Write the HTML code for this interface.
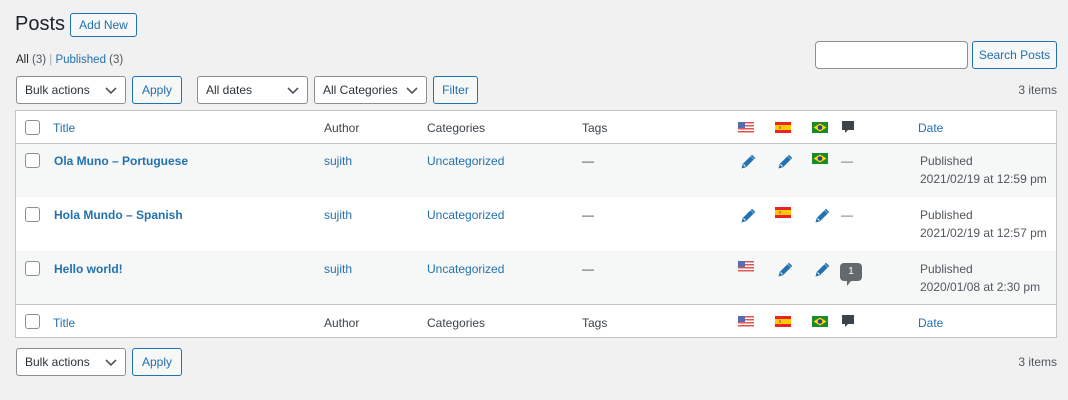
<!DOCTYPE html>
<html><head><meta charset="utf-8"><style>
*{box-sizing:border-box}
body{margin:0;width:1068px;height:400px;background:#f1f1f1;font-family:"Liberation Sans",sans-serif;font-size:12px;color:#3c434a;position:relative;overflow:hidden}
.a{position:absolute;white-space:nowrap}
a,.l{color:#2271b1;text-decoration:none}
.btn{position:absolute;border:1px solid #2271b1;border-radius:3px;background:#f6f7f7;color:#2271b1;font-size:12px;text-align:center;line-height:26px;height:28px}
.sel{position:absolute;border:1px solid #8c8f94;border-radius:3px;background:#fff;height:28px;line-height:26px;padding-left:8px;color:#2c3338;font-size:12px}
.sel svg{position:absolute;right:8px;top:10px}
.cb{position:absolute;width:15px;height:15px;border:1px solid #8c8f94;border-radius:3px;background:#fff}
.row{position:absolute;left:16px;width:1040px}
.fl{position:absolute;width:16px;height:11px}
.b{font-weight:bold}
</style></head><body>
<div class="a" style="left:15px;top:13px;font-size:20px;color:#1d2327">Posts</div>
<div class="btn" style="left:70px;top:13px;width:67px;height:24px;line-height:22px">Add New</div>
<div class="a" style="left:16px;top:54px;font-size:11.5px"><span style="color:#1d2327">All</span> <span style="color:#50575e">(3)</span> <span style="color:#a7aaad">|</span> <span class="l">Published</span> <span style="color:#50575e">(3)</span></div>
<div style="position:absolute;left:815px;top:41px;width:153px;height:28px;background:#fff;border:1px solid #8c8f94;border-radius:4px"></div>
<div class="btn" style="left:972px;top:41px;width:85px">Search Posts</div>
<div class="a" style="right:11px;top:83px;color:#50575e">3 items</div>

<div class="sel" style="left:16px;top:76px;width:110px">Bulk actions<svg width="12" height="8"><path d="M1 1l5 5 5-5" stroke="#50575e" stroke-width="1.6" fill="none"/></svg></div>
<div class="btn" style="left:132px;top:76px;width:50px">Apply</div>
<div class="sel" style="left:197px;top:76px;width:111px">All dates<svg width="12" height="8"><path d="M1 1l5 5 5-5" stroke="#50575e" stroke-width="1.6" fill="none"/></svg></div>
<div class="sel" style="left:314px;top:76px;width:113px">All Categories<svg width="12" height="8"><path d="M1 1l5 5 5-5" stroke="#50575e" stroke-width="1.6" fill="none"/></svg></div>
<div class="btn" style="left:433px;top:76px;width:45px">Filter</div>

<div style="position:absolute;left:15px;top:110px;width:1042px;height:228px;border:1px solid #c3c4c7;background:#fff"></div>
<div class="row" style="top:143px;height:1px;background:#c3c4c7"></div>
<div class="row" style="top:144px;height:53px;background:#f6f7f7"></div>
<div class="row" style="top:251px;height:54px;background:#f6f7f7"></div>
<div class="row" style="top:304px;height:1px;background:#c3c4c7"></div>

<div class="cb" style="left:25px;top:120px"></div>
<div class="a l" style="left:53px;top:121px">Title</div>
<div class="a" style="left:324px;top:121px">Author</div>
<div class="a" style="left:427px;top:121px">Categories</div>
<div class="a" style="left:582px;top:121px">Tags</div>
<div class="a l" style="left:918px;top:121px">Date</div>
<div class="cb" style="left:25px;top:314px"></div>
<div class="a l" style="left:53px;top:316px">Title</div>
<div class="a" style="left:324px;top:316px">Author</div>
<div class="a" style="left:427px;top:316px">Categories</div>
<div class="a" style="left:582px;top:316px">Tags</div>
<div class="a l" style="left:918px;top:316px">Date</div>

<svg width="0" height="0" style="position:absolute"><defs>
<g id="us"><rect width="16" height="11" fill="#fff"/><rect y="0" width="16" height="1.5" fill="#d55"/><rect y="3" width="16" height="1.5" fill="#d55"/><rect y="6" width="16" height="1.5" fill="#d55"/><rect y="9" width="16" height="1.5" fill="#d55"/><rect width="7" height="6" fill="#5a6bb0"/></g>
<g id="es"><rect width="16" height="11" fill="#e22"/><rect y="3" width="16" height="5" fill="#fc0"/><rect x="4" y="4" width="2" height="3" fill="#d74"/></g>
<g id="br"><rect width="16" height="11" fill="#1a8a2a"/><path d="M8 1.5L14.5 5.5 8 9.5 1.5 5.5z" fill="#fd0"/><circle cx="8" cy="5.5" r="2.3" fill="#2a3f9a"/></g>
<g id="pen"><path d="M1.5 14.5l1.2-4.5 7.8-7.8 3.3 3.3-7.8 7.8z" fill="#2271b1"/><path d="M10.8 1.9l1.2-1.2 3.3 3.3-1.2 1.2z" fill="#2271b1"/><path d="M3.5 10.5l2 2" stroke="#fff" stroke-width="1"/></g>
<g id="cm"><path d="M1 1h12v9H7l-3 3v-3H1z" fill="#3c434a"/></g>
</defs></svg>

<svg class="fl" style="left:738px;top:122px"><use href="#us"/></svg>
<svg class="fl" style="left:775px;top:122px"><use href="#es"/></svg>
<svg class="fl" style="left:812px;top:122px"><use href="#br"/></svg>
<svg style="position:absolute;left:841px;top:120px" width="14" height="14"><use href="#cm"/></svg>
<svg class="fl" style="left:738px;top:316px"><use href="#us"/></svg>
<svg class="fl" style="left:775px;top:316px"><use href="#es"/></svg>
<svg class="fl" style="left:812px;top:316px"><use href="#br"/></svg>
<svg style="position:absolute;left:841px;top:314px" width="14" height="14"><use href="#cm"/></svg>

<div class="cb" style="left:25px;top:153px"></div>
<div class="a l b" style="left:54px;top:154px">Ola Muno – Portuguese</div>
<div class="a l" style="left:324px;top:154px">sujith</div>
<div class="a l" style="left:427px;top:154px">Uncategorized</div>
<div class="a" style="left:582px;top:154px">—</div>
<svg style="position:absolute;left:740px;top:154px" width="16" height="16"><use href="#pen"/></svg>
<svg style="position:absolute;left:777px;top:154px" width="16" height="16"><use href="#pen"/></svg>
<svg class="fl" style="left:812px;top:153px"><use href="#br"/></svg>
<div class="a" style="left:841px;top:154px;color:#646970">—</div>
<div class="a" style="left:920px;top:152px;color:#50575e;line-height:18px">Published<br>2021/02/19 at 12:59 pm</div>

<div class="cb" style="left:25px;top:207px"></div>
<div class="a l b" style="left:54px;top:208px">Hola Mundo – Spanish</div>
<div class="a l" style="left:324px;top:208px">sujith</div>
<div class="a l" style="left:427px;top:208px">Uncategorized</div>
<div class="a" style="left:582px;top:208px">—</div>
<svg style="position:absolute;left:740px;top:208px" width="16" height="16"><use href="#pen"/></svg>
<svg class="fl" style="left:775px;top:207px"><use href="#es"/></svg>
<svg style="position:absolute;left:814px;top:208px" width="16" height="16"><use href="#pen"/></svg>
<div class="a" style="left:841px;top:208px;color:#646970">—</div>
<div class="a" style="left:920px;top:206px;color:#50575e;line-height:18px">Published<br>2021/02/19 at 12:57 pm</div>

<div class="cb" style="left:25px;top:261px"></div>
<div class="a l b" style="left:54px;top:262px">Hello world!</div>
<div class="a l" style="left:324px;top:262px">sujith</div>
<div class="a l" style="left:427px;top:262px">Uncategorized</div>
<div class="a" style="left:582px;top:262px">—</div>
<svg class="fl" style="left:738px;top:261px"><use href="#us"/></svg>
<svg style="position:absolute;left:777px;top:262px" width="16" height="16"><use href="#pen"/></svg>
<svg style="position:absolute;left:814px;top:262px" width="16" height="16"><use href="#pen"/></svg>
<div style="position:absolute;left:840px;top:263px;width:22px;height:18px;background:#646970;border-radius:4px;color:#fff;font-size:10px;text-align:center;line-height:18px">1</div>
<div style="position:absolute;left:847px;top:281px;width:0;height:0;border-left:4px solid #646970;border-bottom:5px solid transparent"></div>
<div class="a" style="left:920px;top:260px;color:#50575e;line-height:18px">Published<br>2020/01/08 at 2:30 pm</div>

<div class="sel" style="left:16px;top:348px;width:110px">Bulk actions<svg width="12" height="8"><path d="M1 1l5 5 5-5" stroke="#50575e" stroke-width="1.6" fill="none"/></svg></div>
<div class="btn" style="left:132px;top:348px;width:50px">Apply</div>
<div class="a" style="right:11px;top:355px;color:#50575e">3 items</div>
</body></html>
